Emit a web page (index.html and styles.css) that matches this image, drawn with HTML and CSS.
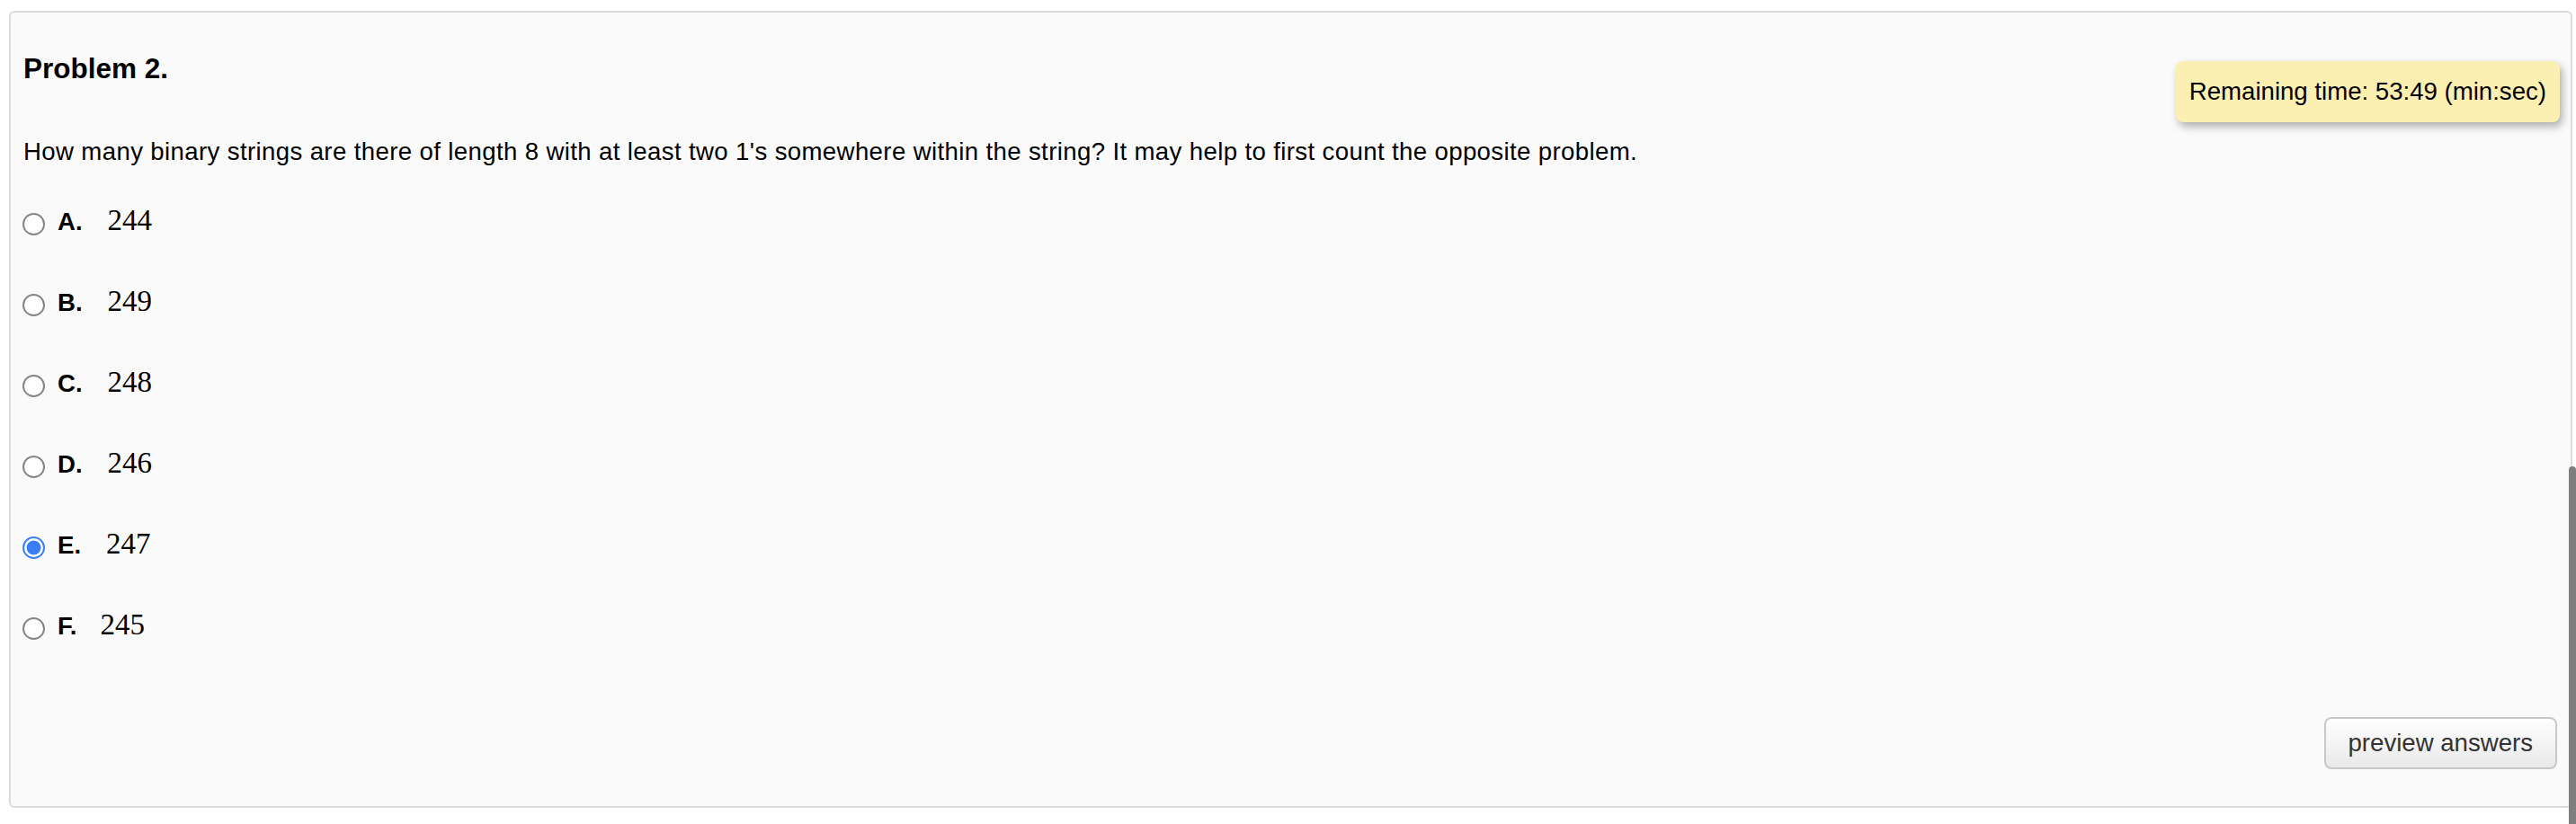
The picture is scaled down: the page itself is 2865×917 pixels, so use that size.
FILE: index.html
```html
<!DOCTYPE html>
<html lang="en">
<head>
<meta charset="utf-8">
<title>Problem 2</title>
<link rel="stylesheet" href="styles.css">
</head>
<body>
<div class="problem">
  <div class="timer">Remaining time: 53:49 (min:sec)</div>
  <h3 class="title">Problem 2.</h3>
  <p class="question">How many binary strings are there of length 8 with at least two 1's somewhere within the string? It may help to first count the opposite problem.</p>
  <div class="choices">
    <label class="choice"><input type="radio" name="ans" class="radio"><span class="choice-text"><b class="letter">A.</b><span class="num">244</span></span></label>
    <label class="choice"><input type="radio" name="ans" class="radio"><span class="choice-text"><b class="letter">B.</b><span class="num">249</span></span></label>
    <label class="choice"><input type="radio" name="ans" class="radio"><span class="choice-text"><b class="letter">C.</b><span class="num">248</span></span></label>
    <label class="choice"><input type="radio" name="ans" class="radio"><span class="choice-text"><b class="letter">D.</b><span class="num">246</span></span></label>
    <label class="choice"><input type="radio" name="ans" class="radio" checked><span class="choice-text"><b class="letter">E.</b><span class="num">247</span></span></label>
    <label class="choice"><input type="radio" name="ans" class="radio"><span class="choice-text"><b class="letter">F.</b><span class="num num-f">245</span></span></label>
  </div>
  <div class="footer">
    <button class="preview" type="button">preview answers</button>
  </div>
</div>
<div class="scroll-thumb"></div>
</body>
</html>
```

FILE: styles.css
```css
html, body {
  background: #ffffff;
}
body {
  margin: 12px 4px 0 10px;
  font-family: "Liberation Sans", Arial, Helvetica, sans-serif;
  font-size: 27.6px;
  color: #000;
  overflow: hidden;
}
.problem {
  position: relative;
  background: #fafafa;
  border: 2px solid #dcdcdc;
  border-radius: 6px;
  padding: 0 15px 41px 14px;
}
.title {
  margin: 44px 0 0 0;
  font-size: 31.5px;
  font-weight: bold;
  line-height: normal;
}
.question {
  margin: 58px 0 0 0;
  line-height: normal;
  letter-spacing: 0.37px;
}
.choices {
  margin-top: 40px;
  display: flex;
  flex-direction: column;
  gap: 40px;
}
.choice {
  display: flex;
  align-items: center;
  height: 50px;
}
.radio {
  appearance: none;
  -webkit-appearance: none;
  box-sizing: border-box;
  width: 25px;
  height: 25px;
  margin: 0 14px 2px -1px;
  border: 2px solid #858585;
  border-radius: 50%;
  background: #ffffff;
  flex: none;
}
.radio:checked {
  border-color: #3b7ff5;
  background: radial-gradient(circle, #3b7ff5 0, #3b7ff5 7.5px, #ffffff 8.3px);
}
.choice-text {
  display: flex;
  align-items: baseline;
  margin-bottom: 10px;
}
.letter {
  font-weight: bold;
  line-height: 1;
}
.num {
  font-family: "Liberation Serif", "Times New Roman", serif;
  font-size: 33px;
  line-height: 1;
  margin-left: 28px;
}
.num-f {
  margin-left: 26px;
}
.footer {
  margin-top: 73px;
  display: flex;
  justify-content: flex-end;
}
.preview {
  font-family: "Liberation Sans", Arial, Helvetica, sans-serif;
  font-size: 27.6px;
  color: #333333;
  height: 58px;
  padding: 0 25px;
  border: 2px solid #c8c8c8;
  border-radius: 8px;
  background: linear-gradient(#fefefe, #e9e9e9);
  line-height: normal;
}
.timer {
  position: absolute;
  top: 54px;
  right: 12px;
  background: #fcefb2;
  border-radius: 8px;
  padding: 18px 15px;
  line-height: 32px;
  box-shadow: 3px 5px 10px rgba(0, 0, 0, 0.3);
  white-space: nowrap;
}
.scroll-thumb {
  position: fixed;
  right: 0;
  top: 519px;
  width: 8px;
  height: 420px;
  background: #7e7e7e;
  border-radius: 4px 4px 0 0;
}
```
